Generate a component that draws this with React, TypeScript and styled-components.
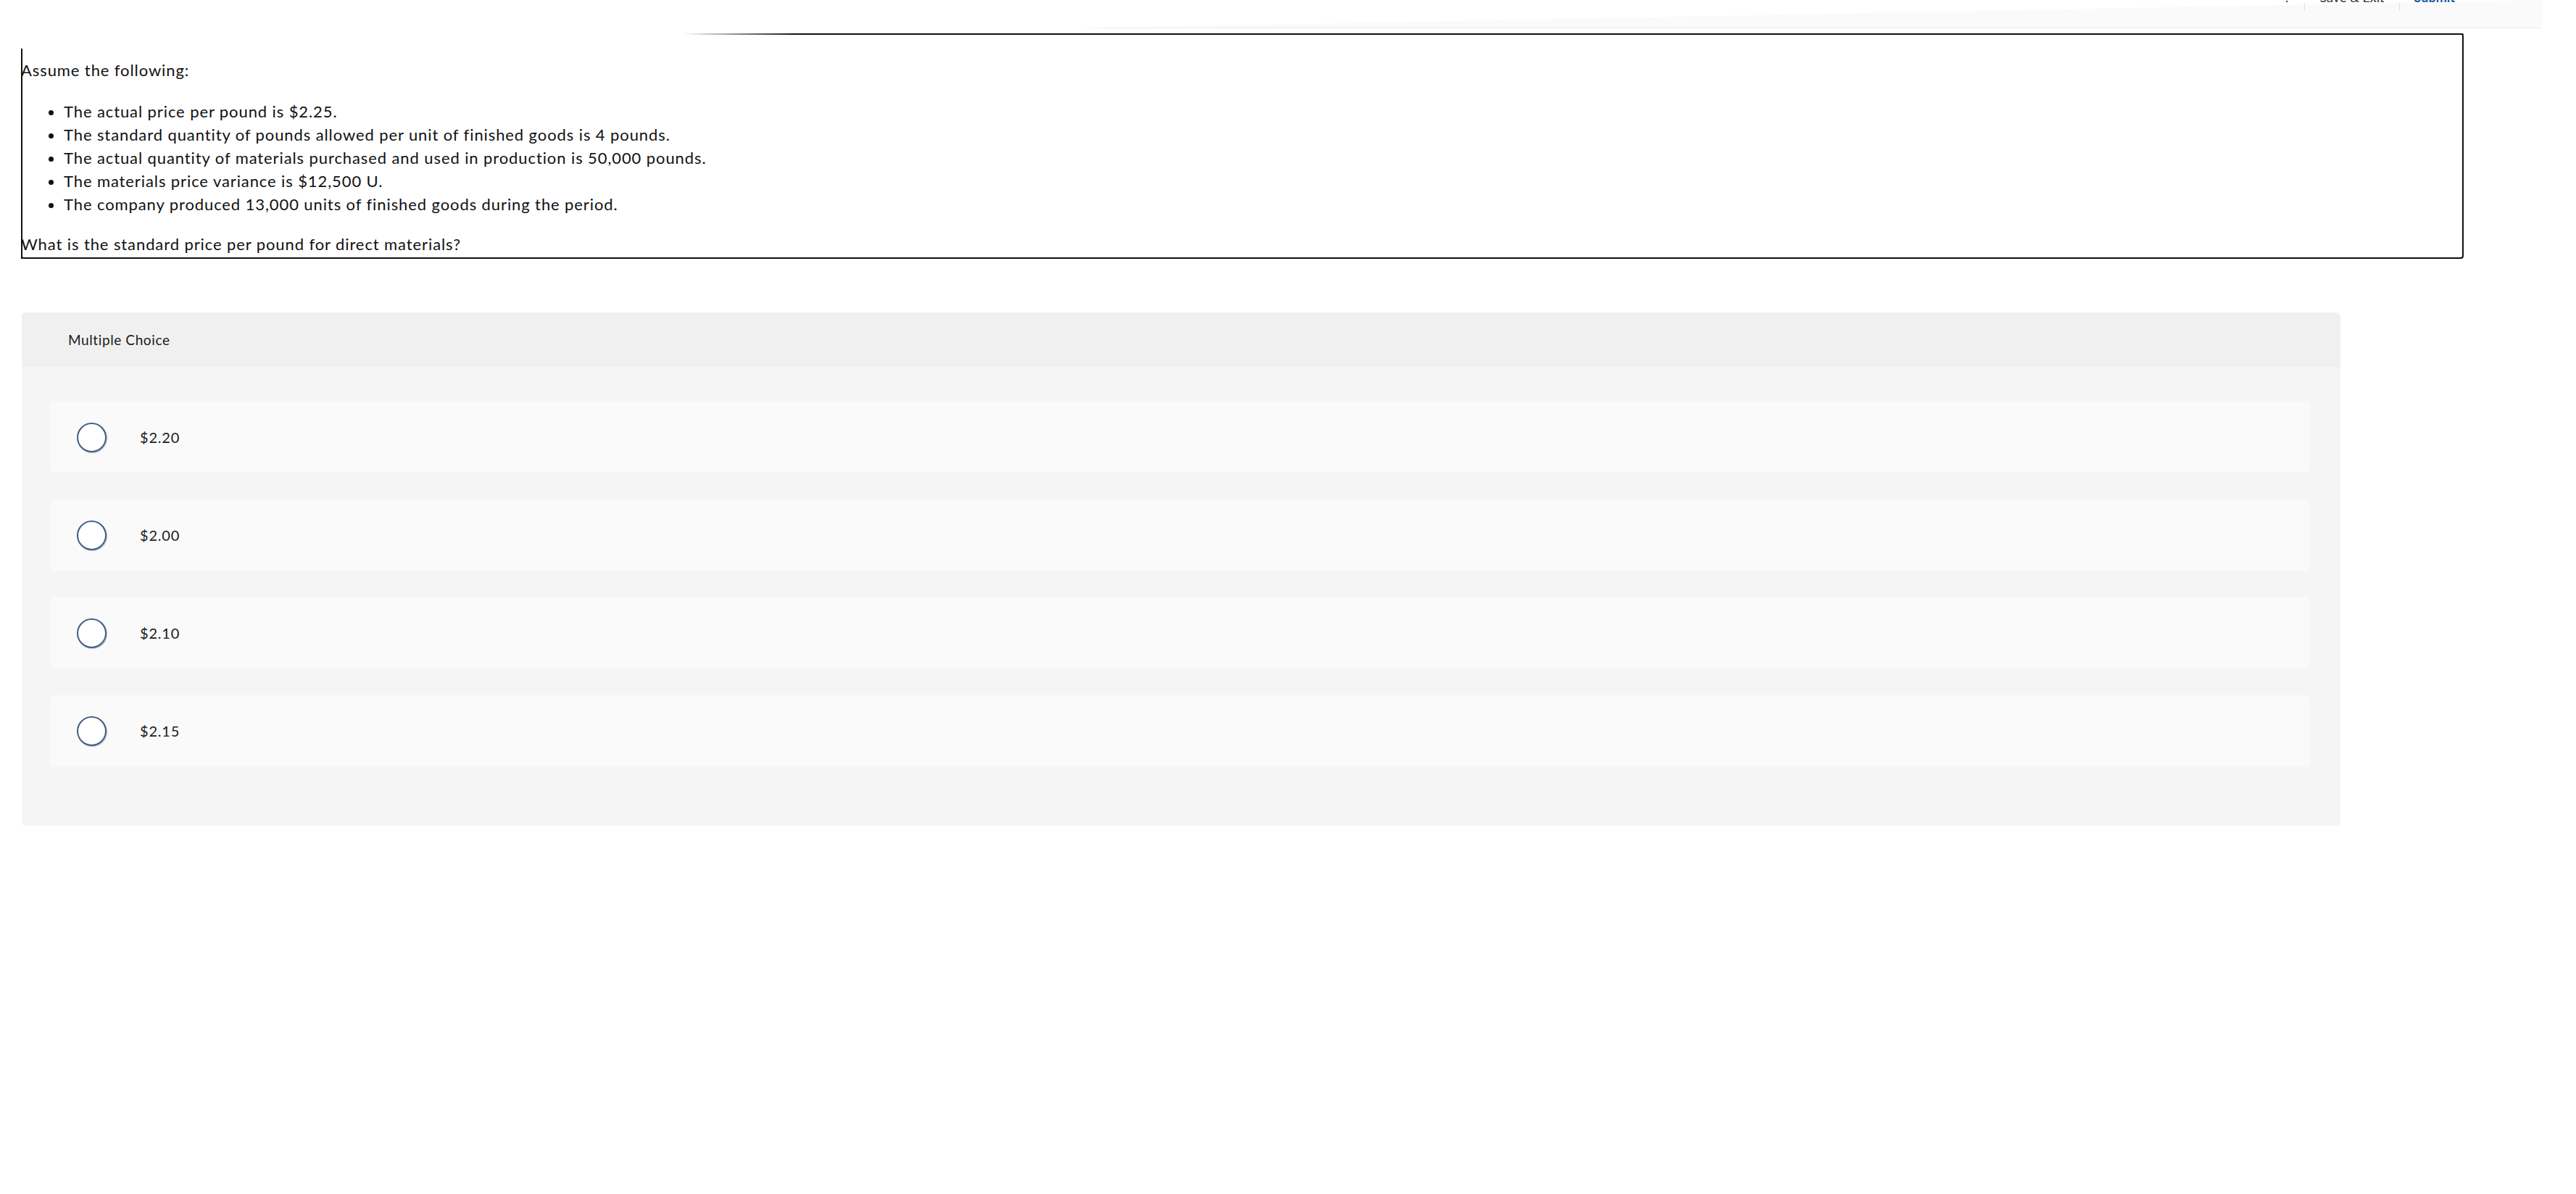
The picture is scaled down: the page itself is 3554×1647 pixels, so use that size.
import styled, { createGlobalStyle } from "styled-components";

const GlobalStyle = createGlobalStyle`
  body {
    margin: 0;
    background: #fff;
    font-family: Lato, "Open Sans", sans-serif;
    color: #111;
  }
`;

const Header = styled.header`
  position: relative;
  width: 3507px;
  height: 39px;
  overflow: hidden;

  &::before {
    content: "";
    position: absolute;
    inset: 0;
    background: linear-gradient(to bottom, #fafafa 38px, #ebebeb 38px);
    clip-path: polygon(1490px 100%, 3507px 0, 3507px 100%);
  }
`;

const Nav = styled.nav`
  position: relative;
  display: flex;
  justify-content: flex-end;
  align-items: flex-start;
  padding-right: 100px;
  margin-top: -15px;
  font-size: 18px;
  line-height: 22px;
`;

const NavItem = styled.span<{ $primary?: boolean }>`
  padding: 0 20px;
  color: ${(p) => (p.$primary ? "#1d56a5" : "#333")};
  font-weight: ${(p) => (p.$primary ? 700 : 400)};
`;

const Divider = styled.span`
  width: 1px;
  height: 11px;
  margin-top: 19px;
  background: #ddd;
`;

const Main = styled.main`
  padding-left: 29px;
`;

const QuestionBox = styled.section`
  position: relative;
  box-sizing: border-box;
  width: 3370px;
  margin-top: 7px;
  padding-bottom: 2px;
  border: 2px solid #111;
  border-top-color: transparent;
  border-left-color: transparent;
  border-radius: 4px;
  font-size: 22px;
  line-height: 32px;
  letter-spacing: 0.9px;
  color: #111;

  &::before {
    content: "";
    position: absolute;
    top: -2px;
    left: -2px;
    right: -2px;
    height: 2px;
    border-top-right-radius: 4px;
    background: linear-gradient(to right, transparent 913px, #111 1070px);
  }

  &::after {
    content: "";
    position: absolute;
    left: -2px;
    top: 19px;
    bottom: -2px;
    width: 2px;
    background: #111;
  }
`;

const Intro = styled.p`
  margin: 33px 0 25px -2px;
`;

const Facts = styled.ul`
  margin: 0 0 23px;
  padding-left: 57px;
`;

const Prompt = styled.p`
  margin: 0 0 0 -2px;
`;

const Panel = styled.section`
  box-sizing: border-box;
  width: 3199px;
  margin: 74px 0 0 1px;
  padding-bottom: 82px;
  background: #f5f5f5;
  border-radius: 6px;
  overflow: hidden;
`;

const PanelHeader = styled.div`
  display: flex;
  align-items: center;
  height: 75px;
  padding-left: 64px;
  background: #f0f0f0;
  font-size: 19px;
  letter-spacing: 0.6px;
  color: #1a1a1a;
`;

const OptionList = styled.div`
  display: flex;
  flex-direction: column;
  gap: 37px;
  padding: 48px 42px 0 39px;
`;

const Option = styled.label`
  display: flex;
  align-items: center;
  gap: 46px;
  height: 98px;
  padding-left: 37px;
  background: #fafafa;
  border-radius: 6px;
  cursor: pointer;
`;

const Radio = styled.span`
  box-sizing: border-box;
  width: 41px;
  height: 41px;
  border: 2px solid #3f5f86;
  border-radius: 50%;
  background: #fff;
  box-shadow: 1px 1px 1px rgba(0, 0, 0, 0.25);
`;

const OptionLabel = styled.span`
  font-size: 20px;
  letter-spacing: 0.8px;
  color: #1a1a1a;
`;

const facts = [
  "The actual price per pound is $2.25.",
  "The standard quantity of pounds allowed per unit of finished goods is 4 pounds.",
  "The actual quantity of materials purchased and used in production is 50,000 pounds.",
  "The materials price variance is $12,500 U.",
  "The company produced 13,000 units of finished goods during the period.",
];

const choices = ["$2.20", "$2.00", "$2.10", "$2.15"];

const App = () => {
  return (
    <>
      <GlobalStyle />
      <Header>
        <Nav>
          <NavItem>?</NavItem>
          <Divider />
          <NavItem>Save &amp; Exit</NavItem>
          <Divider />
          <NavItem $primary>Submit</NavItem>
        </Nav>
      </Header>
      <Main>
        <QuestionBox>
          <Intro>Assume the following:</Intro>
          <Facts>
            {facts.map((fact, index) => (
              <li key={index}>{fact}</li>
            ))}
          </Facts>
          <Prompt>What is the standard price per pound for direct materials?</Prompt>
        </QuestionBox>
        <Panel>
          <PanelHeader>Multiple Choice</PanelHeader>
          <OptionList>
            {choices.map((choice) => (
              <Option key={choice}>
                <Radio />
                <OptionLabel>{choice}</OptionLabel>
              </Option>
            ))}
          </OptionList>
        </Panel>
      </Main>
    </>
  );
};

export default App;
